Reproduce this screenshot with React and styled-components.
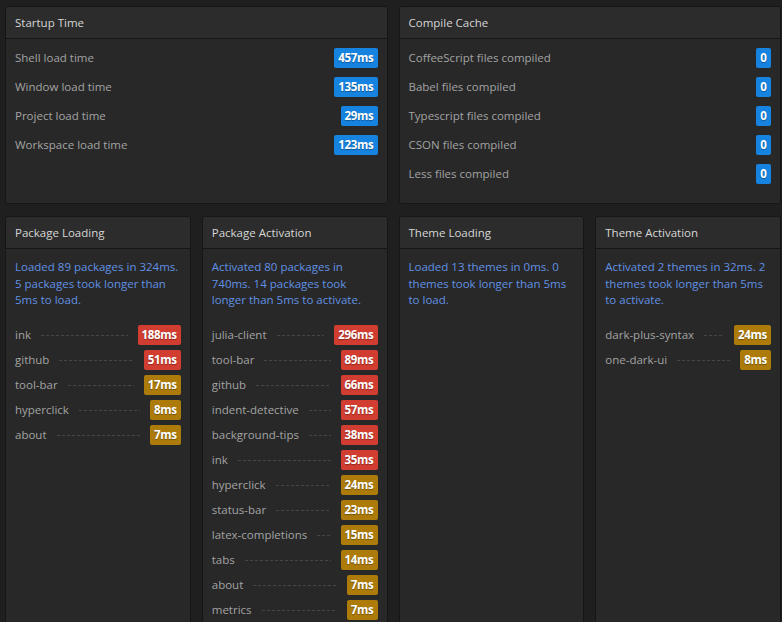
import React from "react";
import styled, { createGlobalStyle } from "styled-components";

const Global = createGlobalStyle`
  html, body { margin: 0; padding: 0; background: #1f1f1f; height: 622px; overflow: hidden; }
  body { font-family: "Open Sans", "Noto Sans", sans-serif; -webkit-font-smoothing: antialiased; }
`;

const Page = styled.div`
  display: grid;
  grid-template-columns: repeat(4, 1fr);
  grid-template-rows: 198px auto;
  gap: 12px 11px;
  padding: 6px 1px 0 5px;
  box-sizing: border-box;
  width: 782px;
`;

const Panel = styled.section`
  grid-column: span ${(p) => p.$span || 1};
  background: #282828;
  border: 1px solid #161616;
  border-radius: 3px;
  min-height: ${(p) => (p.$tall ? "440px" : "0")};
  overflow: hidden;
  box-sizing: border-box;
`;

const Header = styled.header`
  height: 31px;
  display: flex;
  align-items: center;
  padding: 0 9px;
  background: #2c2c2c;
  border-bottom: 1px solid #151515;
  color: #d6d6d6;
  font-size: 11.5px;
`;

const Body = styled.div`
  padding: ${(p) => p.$pad || "4px 9px 15px"};
`;

const StatRow = styled.div`
  height: 29px;
  display: flex;
  align-items: center;
  justify-content: space-between;
  color: #a3a3a3;
  font-size: 11.5px;
`;

const Badge = styled.span`
  display: inline-flex;
  align-items: center;
  justify-content: center;
  height: 20px;
  padding: 0 4px;
  min-width: 7px;
  border-radius: 2px;
  background: ${(p) =>
    p.$tone === "red" ? "#d23d31" : p.$tone === "gold" ? "#ad7b09" : "#1683e0"};
  color: #fff;
  font-weight: 700;
  font-size: 11.5px;
  letter-spacing: -0.3px;
  text-shadow: 0 1px 1px rgba(0, 0, 0, 0.35);
  flex: none;
`;

const Summary = styled.p`
  margin: 0 0 13px;
  color: #6191e4;
  font-size: 11.5px;
  line-height: 16.7px;
`;

const ListRow = styled.div`
  height: 25px;
  display: flex;
  align-items: center;
  color: #a3a3a3;
  font-size: 11.5px;
`;

const Name = styled.span`
  flex: none;
  white-space: nowrap;
`;

const Leader = styled.span`
  flex: 1;
  height: 1px;
  margin: 1px 10px 0;
  background-image: repeating-linear-gradient(
    to right,
    #464646 0 3px,
    transparent 3px 5px
  );
`;

const tone = (ms) => (ms >= 25 ? "red" : "gold");

const startup = [
  ["Shell load time", "457ms"],
  ["Window load time", "135ms"],
  ["Project load time", "29ms"],
  ["Workspace load time", "123ms"],
];

const cache = [
  "CoffeeScript files compiled",
  "Babel files compiled",
  "Typescript files compiled",
  "CSON files compiled",
  "Less files compiled",
];

const pkgLoading = [
  ["ink", 188],
  ["github", 51],
  ["tool-bar", 17],
  ["hyperclick", 8],
  ["about", 7],
];

const pkgActivation = [
  ["julia-client", 296],
  ["tool-bar", 89],
  ["github", 66],
  ["indent-detective", 57],
  ["background-tips", 38],
  ["ink", 35],
  ["hyperclick", 24],
  ["status-bar", 23],
  ["latex-completions", 15],
  ["tabs", 14],
  ["about", 7],
  ["metrics", 7],
];

const themeActivation = [
  ["dark-plus-syntax", 24],
  ["one-dark-ui", 8],
];

function TimingList({ items }) {
  return items.map(([name, ms], i) => (
    <ListRow key={name + i}>
      <Name>{name}</Name>
      <Leader />
      <Badge $tone={tone(ms)}>{ms}ms</Badge>
    </ListRow>
  ));
}

function ListPanel({ title, summary, items }) {
  return (
    <Panel $tall>
      <Header>{title}</Header>
      <Body $pad="10px 9px 10px">
        <Summary>{summary}</Summary>
        {items && <TimingList items={items} />}
      </Body>
    </Panel>
  );
}

export default function App() {
  return (
    <>
      <Global />
      <Page>
        <Panel $span={2}>
          <Header>Startup Time</Header>
          <Body>
            {startup.map(([label, v]) => (
              <StatRow key={label}>
                <span>{label}</span>
                <Badge>{v}</Badge>
              </StatRow>
            ))}
          </Body>
        </Panel>
        <Panel $span={2}>
          <Header>Compile Cache</Header>
          <Body>
            {cache.map((label) => (
              <StatRow key={label}>
                <span>{label}</span>
                <Badge>0</Badge>
              </StatRow>
            ))}
          </Body>
        </Panel>
        <ListPanel
          title="Package Loading"
          summary="Loaded 89 packages in 324ms. 5 packages took longer than 5ms to load."
          items={pkgLoading}
        />
        <ListPanel
          title="Package Activation"
          summary="Activated 80 packages in 740ms. 14 packages took longer than 5ms to activate."
          items={pkgActivation}
        />
        <ListPanel
          title="Theme Loading"
          summary="Loaded 13 themes in 0ms. 0 themes took longer than 5ms to load."
        />
        <ListPanel
          title="Theme Activation"
          summary="Activated 2 themes in 32ms. 2 themes took longer than 5ms to activate."
          items={themeActivation}
        />
      </Page>
    </>
  );
}
